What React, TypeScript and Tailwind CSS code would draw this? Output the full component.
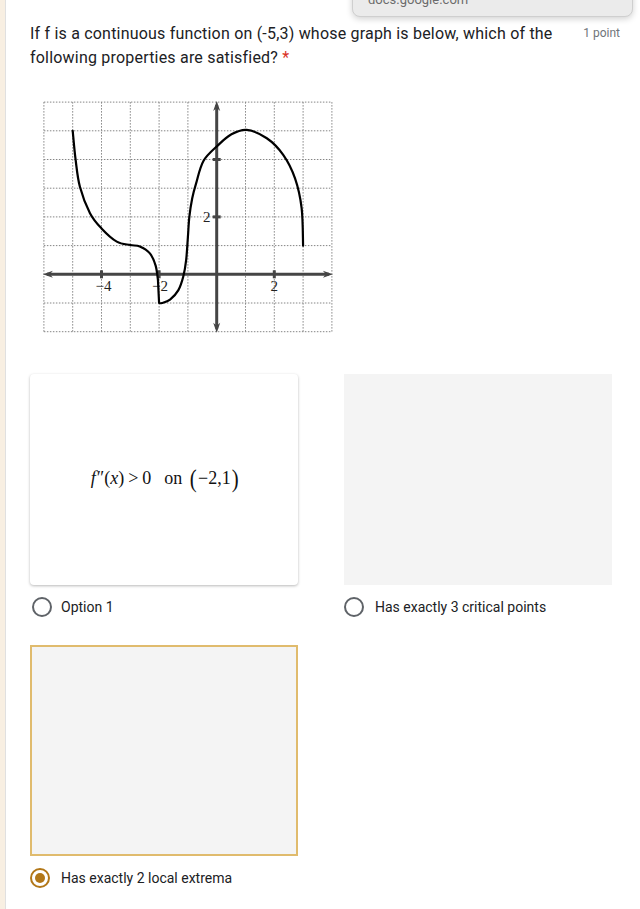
import React from "react";

type P = [number, number];

const OX = 176.7;
const OY = 176.3;
const UX = 28.8;
const UY = 28.7;
const px = (u: number) => OX + UX * u;
const py = (v: number) => OY - UY * v;

function smoothPath(pts: P[]): string {
  const p = pts.map(([u, v]) => [px(u), py(v)] as P);
  let d = `M ${p[0][0].toFixed(2)} ${p[0][1].toFixed(2)}`;
  for (let i = 0; i < p.length - 1; i++) {
    const p0 = p[i - 1] || p[i];
    const p1 = p[i];
    const p2 = p[i + 1];
    const p3 = p[i + 2] || p2;
    const c1x = p1[0] + (p2[0] - p0[0]) / 6;
    const c1y = p1[1] + (p2[1] - p0[1]) / 6;
    const c2x = p2[0] - (p3[0] - p1[0]) / 6;
    const c2y = p2[1] - (p3[1] - p1[1]) / 6;
    d += ` C ${c1x.toFixed(2)} ${c1y.toFixed(2)}, ${c2x.toFixed(2)} ${c2y.toFixed(2)}, ${p2[0].toFixed(2)} ${p2[1].toFixed(2)}`;
  }
  return d;
}

const seg1: P[] = [
  [-5, 5],
  [-4.9, 4.0],
  [-4.75, 3.05],
  [-4.4, 2.13],
  [-4, 1.6],
  [-3.47, 1.14],
  [-3, 1.02],
  [-2.67, 0.97],
  [-2.32, 0.73],
  [-2.12, 0.3],
  [-2.04, -0.2],
];
const seg2: P[] = [
  [-2, -1],
  [-1.9, -1.0],
  [-1.62, -0.88],
  [-1.33, -0.55],
  [-1.16, -0.08],
  [-1.06, 0.5],
  [-1.0, 1.3],
  [-0.95, 2.0],
  [-0.85, 2.65],
  [-0.72, 3.15],
  [-0.46, 3.95],
  [0.05, 4.5],
  [0.5, 4.87],
  [1.04, 5.03],
  [1.74, 4.74],
  [2.31, 4.16],
  [2.72, 3.34],
  [2.95, 2.3],
  [3.0, 1.0],
];

function Graph() {
  const xs = [-6, -5, -4, -3, -2, -1, 0, 1, 2, 3, 4];
  const ys = [-2, -1, 0, 1, 2, 3, 4, 5, 6];
  const curve = smoothPath(seg1) + ` L ${px(-2).toFixed(2)} ${py(-1).toFixed(2)} ` + smoothPath(seg2).replace(/^M [^C]*/, "");
  return (
    <svg width="296" height="236" viewBox="0 0 296 236" className="block">
      {xs.map((u) => (
        <line key={"x" + u} x1={px(u)} y1={py(6)} x2={px(u)} y2={py(-2)} stroke="#858585" strokeWidth="1" strokeDasharray="1.5 1.5" />
      ))}
      {ys.map((v) => (
        <line key={"y" + v} x1={px(-6)} y1={py(v)} x2={px(4)} y2={py(v)} stroke="#858585" strokeWidth="1" strokeDasharray="1.5 1.5" />
      ))}
      {/* axes */}
      <line x1={px(-6) + 3} y1={OY} x2={px(4) - 3} y2={OY} stroke="#454545" strokeWidth="3" />
      <line x1={OX} y1={py(6) + 3} x2={OX} y2={py(-2) - 3} stroke="#454545" strokeWidth="3" />
      {/* arrowheads */}
      <path d={`M ${px(4) + 1} ${OY} L ${px(4) - 9} ${OY - 3.5} L ${px(4) - 6} ${OY} L ${px(4) - 9} ${OY + 3.5} Z`} fill="#454545" />
      <path d={`M ${px(-6) - 1} ${OY} L ${px(-6) + 9} ${OY - 3.5} L ${px(-6) + 6} ${OY} L ${px(-6) + 9} ${OY + 3.5} Z`} fill="#454545" />
      <path d={`M ${OX} ${py(6) - 1} L ${OX - 3.5} ${py(6) + 9} L ${OX} ${py(6) + 6} L ${OX + 3.5} ${py(6) + 9} Z`} fill="#454545" />
      <path d={`M ${OX} ${py(-2) + 1} L ${OX - 3.5} ${py(-2) - 9} L ${OX} ${py(-2) - 6} L ${OX + 3.5} ${py(-2) - 9} Z`} fill="#454545" />
      {/* ticks */}
      {[-4, -2, 2].map((u) => (
        <line key={"t" + u} x1={px(u)} y1={OY - 4} x2={px(u)} y2={OY + 4} stroke="#454545" strokeWidth="3" />
      ))}
      {[2, 4].map((v) => (
        <line key={"ty" + v} x1={OX - 4} y1={py(v)} x2={OX + 4} y2={py(v)} stroke="#454545" strokeWidth="3" />
      ))}
      {/* labels */}
      <g fontFamily="'Liberation Serif', 'DejaVu Serif', serif" fontSize="15" fill="#222">
        <text x={px(-4) + 2} y={OY + 17} textAnchor="middle">−4</text>
        <text x={px(-2) + 1} y={OY + 17} textAnchor="middle">−2</text>
        <text x={px(2)} y={OY + 17} textAnchor="middle">2</text>
        <text x={OX - 10} y={py(2) + 5} textAnchor="middle">2</text>
      </g>
      <path d={curve} fill="none" stroke="#000" strokeWidth="2.2" strokeLinejoin="round" strokeLinecap="round" />
    </svg>
  );
}

function Radio({ selected }: { selected?: boolean }) {
  if (selected) {
    return (
      <span className="flex h-5 w-5 shrink-0 items-center justify-center rounded-full border-2 border-[#b27718]">
        <span className="h-[10px] w-[10px] rounded-full bg-[#b27718]" />
      </span>
    );
  }
  return <span className="block h-5 w-5 shrink-0 rounded-full border-2 border-[#5f6368]" />;
}

function OptionLabel({ selected, text, shift }: { selected?: boolean; text: string; shift?: boolean }) {
  return (
    <div className={"mt-[12px] flex h-5 items-center " + (shift ? "pl-[2px] gap-[9px]" : "gap-[11px]")}>
      <Radio selected={selected} />
      <span className="text-[14px] leading-5 text-[#202124] [font-family:Roboto,'Noto_Sans',sans-serif]">{text}</span>
    </div>
  );
}

export default function App() {
  return (
    <div className="relative h-[909px] w-[640px] overflow-hidden bg-white">
      {/* top url popup */}
      <div className="absolute left-[352px] top-[-20px] h-[37px] w-[281px] rounded-b-[8px] border border-[#cfcfcf] bg-[#ebebeb] shadow-[0_2px_6px_rgba(0,0,0,0.18)]">
        <span className="absolute left-[15px] top-[11px] text-[13px] leading-4 text-[#6b6b6b] [font-family:Roboto,sans-serif]">docs.google.com</span>
      </div>
      <div className="flex h-full">
        <div className="w-[5px] shrink-0 bg-[#f8efe2]" />
        <div className="flex-1 border-l border-[#e0e0e0] bg-white pl-[24px] pt-[22px]">
          <div className="flex items-start justify-between">
            <div className="w-[545px] text-[16px] leading-6 tracking-[0.2px] text-[#202124] [font-family:Roboto,'Noto_Sans',sans-serif]">
              If f is a continuous function on (-5,3) whose graph is below, which of the following properties are satisfied? <span className="text-[#d93025]">*</span>
            </div>
            <div className="pr-[20px] pt-[1px] text-[12px] leading-5 text-[#70757a] [font-family:Roboto,sans-serif]">1 point</div>
          </div>
          <div className="ml-[10px] mt-[28px]">
            <Graph />
          </div>
          <div className="mt-[40px] grid w-[582px] grid-cols-[268px_268px] gap-x-[46px]">
            <div>
              <div className="flex h-[211px] items-center justify-center rounded-[4px] bg-white shadow-[0_1px_3px_rgba(0,0,0,0.28)]">
                <div className="pb-[2px] pl-[2px] text-[18px] text-[#111] [font-family:'Liberation_Serif','DejaVu_Serif',serif]">
                  <i>f</i>
                  <span className="ml-[1px]">″</span>(<i>x</i>)<span className="mx-[4px]">&gt;</span>0<span className="ml-[13px] mr-[7px]">on</span>
                  <span className="inline-block align-[-3px] text-[26px] leading-none [transform:scaleX(0.8)]">(</span>
                  −2,1
                  <span className="inline-block align-[-3px] text-[26px] leading-none [transform:scaleX(0.8)]">)</span>
                </div>
              </div>
              <OptionLabel text="Option 1" shift />
            </div>
            <div>
              <div className="h-[211px] bg-[#f4f4f4]" />
              <OptionLabel text="Has exactly 3 critical points" />
            </div>
            <div className="mt-[28px]">
              <div className="h-[211px] border-2 border-[#e0bb6d] bg-[#f4f4f4]" />
              <OptionLabel text="Has exactly 2 local extrema" selected />
            </div>
          </div>
        </div>
      </div>
    </div>
  );
}
